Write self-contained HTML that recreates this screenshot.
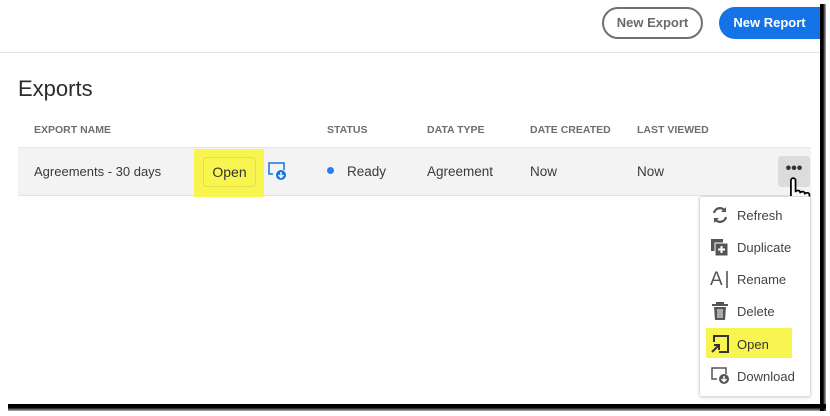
<!DOCTYPE html>
<html><head><style>
*{margin:0;padding:0;box-sizing:border-box}
body{width:830px;height:416px;background:#fff;position:relative;overflow:hidden;font-family:"Liberation Sans",sans-serif;color:#2c2c2c}
.abs{position:absolute}
.sh1{left:8px;top:404px;width:818px;height:7px;background:linear-gradient(#000,#000 50%,rgba(0,0,0,0.3));}
.sh2{left:820px;top:4px;width:6px;height:407px;background:linear-gradient(90deg,#000,#000 50%,rgba(0,0,0,0.3));}
.btn{position:absolute;top:7px;height:32px;border-radius:16px;font-weight:bold;font-size:13px;line-height:28px;text-align:center}
.th{position:absolute;top:124px;font-size:10.5px;font-weight:bold;color:#6e6e6e;letter-spacing:0}
.td{position:absolute;top:164px;font-size:13.5px;color:#3a3a3a}
.mi{position:absolute;left:737px;font-size:13px;color:#444}
.ic{position:absolute;left:711px}
</style></head><body>
<div class="abs sh1"></div><div class="abs sh2"></div>
<div class="btn" style="left:602px;width:101px;border:2px solid #707070;color:#6a6a6a">New Export</div>
<div class="btn" style="left:719px;width:101px;background:#1473e6;color:#fff;line-height:32px;border-radius:16px 0 0 16px">New Report</div>
<div class="abs" style="left:0;top:52px;width:820px;height:1px;background:#e4e4e4"></div>
<div class="abs" style="left:18px;top:76px;font-size:22px;color:#2c2c2c">Exports</div>
<div class="th" style="left:34px">EXPORT NAME</div>
<div class="th" style="left:327px">STATUS</div>
<div class="th" style="left:427px">DATA TYPE</div>
<div class="th" style="left:530px">DATE CREATED</div>
<div class="th" style="left:637px">LAST VIEWED</div>
<div class="abs" style="left:18px;top:147px;width:793px;height:49px;background:#f3f3f3;border-top:1px solid #e6e6e6;border-bottom:1px solid #e3e3e3"></div>
<div class="td" style="left:34px;font-size:13px">Agreements - 30 days</div>
<div class="abs" style="left:194px;top:149px;width:70px;height:48px;background:#f9f550"></div>
<div class="abs" style="left:203px;top:157px;width:53px;height:30px;border:1px solid #e6e040;border-radius:4px;font-size:14px;line-height:28px;text-align:center;color:#333">Open</div>
<svg class="abs" style="left:268px;top:162px" width="20" height="20"><path d="M5 12H1V1h15v7" fill="none" stroke="#1473e6" stroke-width="1.5"/><circle cx="13" cy="13" r="5" fill="#1473e6"/><path d="M13 10v5M10.5 13l2.5 2.5 2.5-2.5" stroke="#fff" stroke-width="1.5" fill="none"/></svg>
<div class="abs" style="left:327px;top:167px;width:7px;height:7px;border-radius:50%;background:#2680eb"></div>
<div class="td" style="left:347px">Ready</div>
<div class="td" style="left:427px">Agreement</div>
<div class="td" style="left:530px">Now</div>
<div class="td" style="left:637px">Now</div>
<div class="abs" style="left:778px;top:156px;width:32px;height:31px;background:#dcdcdc;border-radius:3px;font-size:16px;font-weight:bold;text-align:center;line-height:26px;color:#333">•••</div>
<svg class="abs" style="left:784px;top:176px" width="30" height="44" viewBox="0 0 26 38"><path d="M6 4c0-3 4-3 4 0v10c0-2 4-2 4 0v1c0-2 4-2 4 0v1c0-2 4-2 4 0v8c0 5-3 9-7 9h-4c-3 0-5-3-8-8l-2-3c-1-2 1-4 3-2l2 2z" fill="#fff" stroke="#000" stroke-width="1.5"/></svg>
<div class="abs" style="left:699px;top:196px;width:112px;height:201px;background:#fff;border:1px solid #ddd;border-radius:3px;box-shadow:0 1px 3px rgba(0,0,0,.15)"></div>
<div class="abs" style="left:706px;top:328px;width:86px;height:30px;background:#f9f550"></div>
<svg class="ic" style="top:206px" width="18" height="18"><path d="M3 7a6 6 0 0 1 11-2M15 11a6 6 0 0 1-11 2" fill="none" stroke="#555" stroke-width="2.2"/><path d="M15 1v5h-5zM3 17v-5h5z" fill="#555"/></svg>
<div class="mi" style="top:208px">Refresh</div>
<svg class="ic" style="top:239px" width="18" height="18"><rect x="0" y="0" width="12" height="12" fill="#555"/><rect x="4" y="4" width="13" height="13" fill="#555" stroke="#fff"/><path d="M10.5 7v7M7 10.5h7" stroke="#fff" stroke-width="2"/></svg>
<div class="mi" style="top:240px">Duplicate</div>
<div class="mi" style="left:710px;top:269px;font-size:19px;color:#555">A</div>
<div class="abs" style="left:726px;top:271px;width:2px;height:17px;background:#777"></div>
<div class="mi" style="top:272px">Rename</div>
<svg class="ic" style="top:302px" width="18" height="18"><path d="M1 3h16M6 3V1h6v2" stroke="#555" stroke-width="2" fill="none"/><path d="M3 5h12l-1 13H4z" fill="#555"/><path d="M7 7v9M9 7v9M11 7v9" stroke="#fff"/></svg>
<div class="mi" style="top:304px">Delete</div>
<svg class="ic" style="top:335px" width="18" height="18"><path d="M3 7V1h14v16H8" fill="none" stroke="#333" stroke-width="2"/><path d="M1 17l7-7M3 10h5v5" fill="none" stroke="#333" stroke-width="2"/></svg>
<div class="mi" style="top:337px;color:#333">Open</div>
<svg class="ic" style="top:367px" width="20" height="18"><path d="M6 12H1V1h14v6" fill="none" stroke="#555" stroke-width="1.5"/><circle cx="13" cy="12" r="5" fill="#555"/><path d="M13 9v5M10.5 12l2.5 2.5 2.5-2.5" stroke="#fff" stroke-width="1.5" fill="none"/></svg>
<div class="mi" style="top:369px">Download</div>
</body></html>
